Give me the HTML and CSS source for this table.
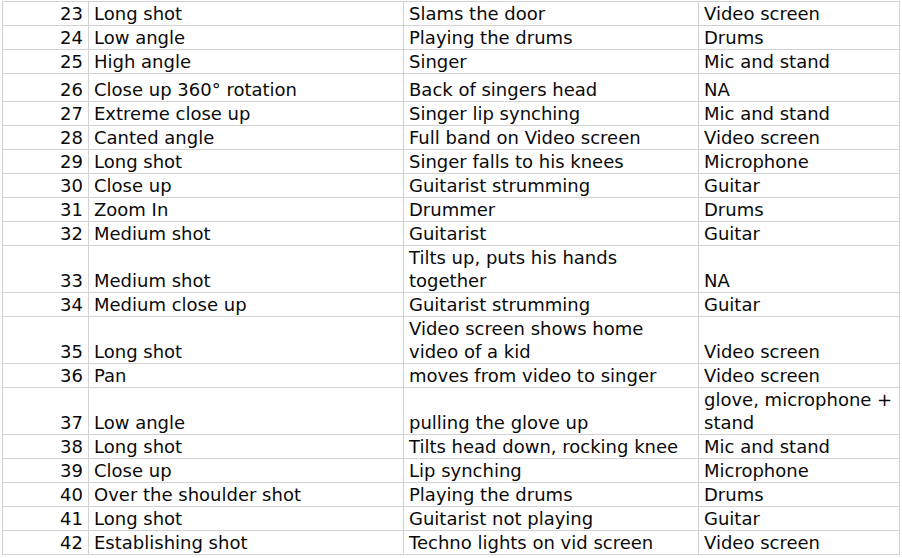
FILE: index.html
```html
<!DOCTYPE html>
<html>
<head>
<meta charset="utf-8">
<link rel="stylesheet" href="styles.css">
</head>
<body>
<table class="sheet">
<colgroup><col class="c-num"><col class="c-shot"><col class="c-act"><col class="c-prop"></colgroup>
<tr><td class="num">23</td><td>Long shot</td><td>Slams the door</td><td>Video screen</td></tr>
<tr><td class="num">24</td><td>Low angle</td><td>Playing the drums</td><td>Drums</td></tr>
<tr><td class="num">25</td><td>High angle</td><td>Singer</td><td>Mic and stand</td></tr>
<tr class="tall"><td class="num">26</td><td>Close up 360° rotation</td><td>Back of singers head</td><td>NA</td></tr>
<tr><td class="num">27</td><td>Extreme close up</td><td>Singer lip synching</td><td>Mic and stand</td></tr>
<tr><td class="num">28</td><td>Canted angle</td><td>Full band on Video screen</td><td>Video screen</td></tr>
<tr><td class="num">29</td><td>Long shot</td><td>Singer falls to his knees</td><td>Microphone</td></tr>
<tr><td class="num">30</td><td>Close up</td><td>Guitarist strumming</td><td>Guitar</td></tr>
<tr><td class="num">31</td><td>Zoom In</td><td>Drummer</td><td>Drums</td></tr>
<tr><td class="num">32</td><td>Medium shot</td><td>Guitarist</td><td>Guitar</td></tr>
<tr><td class="num">33</td><td>Medium shot</td><td>Tilts up, puts his hands<br>together</td><td>NA</td></tr>
<tr><td class="num">34</td><td>Medium close up</td><td>Guitarist strumming</td><td>Guitar</td></tr>
<tr><td class="num">35</td><td>Long shot</td><td>Video screen shows home<br>video of a kid</td><td>Video screen</td></tr>
<tr><td class="num">36</td><td>Pan</td><td>moves from video to singer</td><td>Video screen</td></tr>
<tr><td class="num">37</td><td>Low angle</td><td>pulling the glove up</td><td>glove, microphone +<br>stand</td></tr>
<tr><td class="num">38</td><td>Long shot</td><td>Tilts head down, rocking knee</td><td>Mic and stand</td></tr>
<tr><td class="num">39</td><td>Close up</td><td>Lip synching</td><td>Microphone</td></tr>
<tr><td class="num">40</td><td>Over the shoulder shot</td><td>Playing the drums</td><td>Drums</td></tr>
<tr><td class="num">41</td><td>Long shot</td><td>Guitarist not playing</td><td>Guitar</td></tr>
<tr><td class="num">42</td><td>Establishing shot</td><td>Techno lights on vid screen</td><td>Video screen</td></tr>
</table>
</body>
</html>
```
FILE: styles.css
```css
html, body {
  margin: 0;
  padding: 0;
  background: #ffffff;
}
body {
  padding: 1px 0 0 2px;
}
.sheet {
  border-collapse: collapse;
  table-layout: fixed;
  width: 897px;
  font-family: "DejaVu Sans", Verdana, sans-serif;
  font-size: 18px;
  line-height: 23px;
  color: #0a0a0a;
}
.c-num { width: 86px; }
.c-shot { width: 315px; }
.c-act { width: 295px; }
.c-prop { width: 201px; }
.sheet td {
  border: 1px solid #d2d2d2;
  padding: 0 5px;
  vertical-align: bottom;
  white-space: nowrap;
  overflow: hidden;
}
.sheet td.num {
  text-align: right;
  padding-right: 5px;
}
.sheet tr.tall td {
  height: 27px;
}
```
